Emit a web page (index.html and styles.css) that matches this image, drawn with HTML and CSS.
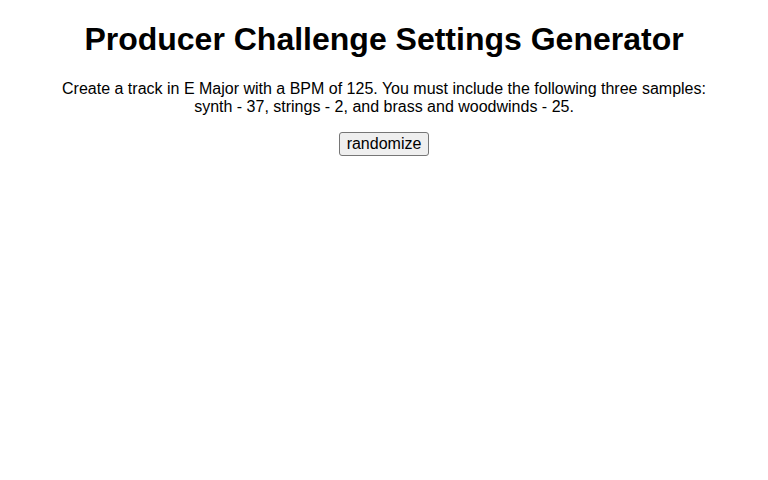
FILE: index.html
```html
<!DOCTYPE html>
<html>
<head>
<meta charset="utf-8">
<link rel="stylesheet" href="styles.css">
</head>
<body class="page">
<h1 class="title">Producer Challenge Settings Generator</h1>
<p class="prompt">Create a track in E Major with a BPM of 125. You must include the following three samples: synth - 37, strings - 2, and brass and woodwinds - 25.</p>
<div class="actions"><button class="btn">randomize</button></div>
</body>
</html>
```
FILE: styles.css
```css
html {
  margin: 0;
  padding: 0;
}
.page {
  margin: 0;
  padding: 0 8px;
  font-family: "Liberation Sans", Arial, sans-serif;
  text-align: center;
  color: #000;
  background: #fff;
}
.title {
  font-size: 32px;
  font-weight: bold;
  margin: 21.44px 0;
}
.prompt {
  font-size: 16px;
  line-height: 18px;
  max-width: 680px;
  margin: 16px auto;
}
.actions {
  display: flex;
  justify-content: center;
}
.btn {
  font-family: "Liberation Sans", Arial, sans-serif;
  font-size: 16px;
  line-height: 18px;
  padding: 2px 7px;
  border: 1px solid #767676;
  border-radius: 3px;
  background: #efefef;
  color: #000;
}
```
